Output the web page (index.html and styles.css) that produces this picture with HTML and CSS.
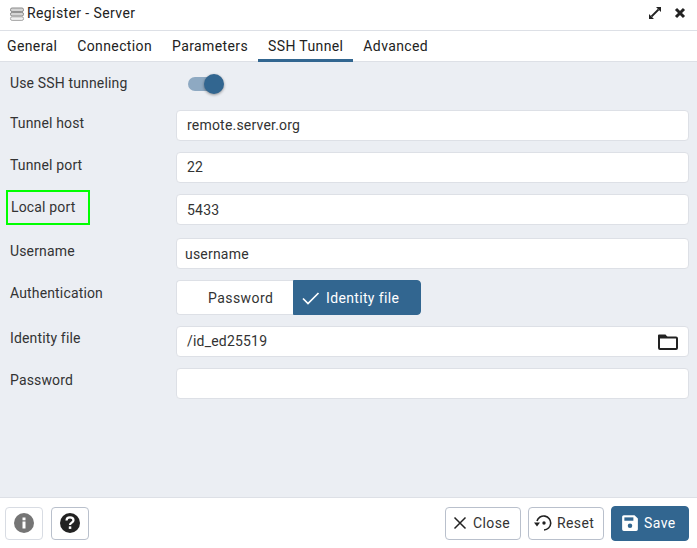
FILE: index.html
```html
<!DOCTYPE html>
<html lang="en">
<head>
    <meta charset="UTF-8">
    <meta name="viewport" content="width=device-width, initial-scale=1.0">
    <title>Register - Server</title>
    <link rel="stylesheet" href="styles.css">
</head>
<body>
    <div class="dialog">
        <div class="title-bar">
            <div class="title">
                <svg class="server-icon" width="16" height="16" viewBox="0 0 16 16">
                    <rect x="1.5" y="2" width="13" height="3.6" rx="1.6" fill="#d5d5d5" stroke="#8a8a8a"/>
                    <rect x="1.5" y="6.4" width="13" height="3.6" rx="1.6" fill="#d5d5d5" stroke="#8a8a8a"/>
                    <rect x="1.5" y="10.8" width="13" height="3.6" rx="1.6" fill="#f0f0f0" stroke="#a5a5a5"/>
                </svg>
                <span>Register - Server</span>
            </div>
            <div class="window-btns">
                <svg width="14" height="14" viewBox="0 0 14 14">
                    <path d="M3.5 10.5 10.5 3.5" stroke="#222" stroke-width="1.8"/>
                    <path d="M8 1h5v5zM1 8v5h5z" fill="#222"/>
                </svg>
                <svg width="12" height="12" viewBox="0 0 12 12">
                    <path d="M2 2 10 10M10 2 2 10" stroke="#222" stroke-width="3"/>
                </svg>
            </div>
        </div>

        <div class="tabs">
            <div class="tab">General</div>
            <div class="tab">Connection</div>
            <div class="tab">Parameters</div>
            <div class="tab active">SSH Tunnel</div>
            <div class="tab">Advanced</div>
        </div>

        <div class="form">
            <div class="row row-toggle">
                <label>Use SSH tunneling</label>
                <div class="toggle"><span class="track"></span><span class="knob"></span></div>
            </div>
            <div class="row">
                <label>Tunnel host</label>
                <div class="input">remote.server.org</div>
            </div>
            <div class="row">
                <label>Tunnel port</label>
                <div class="input">22</div>
            </div>
            <div class="row">
                <label class="marked">Local port</label>
                <div class="input low">5433</div>
            </div>
            <div class="row row-username">
                <label>Username</label>
                <div class="input low tight">username</div>
            </div>
            <div class="row row-auth">
                <label>Authentication</label>
                <div class="switch">
                    <div class="switch-btn">Password</div>
                    <div class="switch-btn selected">
                        <svg width="20" height="20" viewBox="0 0 20 20">
                            <path d="M2 10.500 7 15.500 17.500 5" fill="none" stroke="#fff" stroke-width="1.7"/>
                        </svg>
                        Identity file
                    </div>
                </div>
            </div>
            <div class="row">
                <label>Identity file</label>
                <div class="input with-icon">
                    <span>/id_ed25519</span>
                    <svg width="20" height="16" viewBox="0 0 20 16">
                        <path d="M1 3.500V14a1 1 0 0 0 1 1H18a1 1 0 0 0 1-1V4.500a1 1 0 0 0-1-1H1z" fill="none" stroke="#222" stroke-width="2"/>
                        <path d="M0 4V1.500A1 1 0 0 1 1 .500H7.500L10 3.500V4z" fill="#222"/>
                    </svg>
                </div>
            </div>
            <div class="row">
                <label>Password</label>
                <div class="input"></div>
            </div>
        </div>

        <div class="footer">
            <div class="footer-group">
                <button class="btn icon-btn faded">
                    <svg width="22" height="22" viewBox="0 0 22 22">
                        <circle cx="11" cy="11" r="10" fill="#757575"/>
                        <rect x="9.500" y="9.500" width="3" height="7" fill="#fff"/>
                        <rect x="9.500" y="5.500" width="3" height="2.800" fill="#fff"/>
                    </svg>
                </button>
                <button class="btn icon-btn">
                    <svg width="22" height="22" viewBox="0 0 22 22">
                        <circle cx="11" cy="11" r="10" fill="#222"/>
                        <path d="M7.500 8.500C7.500 6.500 9 5.300 11 5.300S14.500 6.500 14.500 8.300C14.500 10.500 11 10.700 11 13" fill="none" stroke="#fff" stroke-width="2.200"/>
                        <rect x="9.800" y="14.400" width="2.500" height="2.500" fill="#fff"/>
                    </svg>
                </button>
            </div>
            <div class="footer-group">
                <button class="btn btn-close">
                    <svg width="16" height="16" viewBox="0 0 16 16">
                        <path d="M2.500 2.500 13.500 13.500M13.500 2.500 2.500 13.500" stroke="#222" stroke-width="1.500"/>
                    </svg>
                    Close
                </button>
                <button class="btn btn-reset">
                    <svg width="18" height="16" viewBox="0 0 18 16">
                        <path d="M3 6A7 7 0 1 1 10 15" fill="none" stroke="#222" stroke-width="1.600"/>
                        <path d="M0 7.500H6L3 11.500z" fill="#222"/>
                        <circle cx="10" cy="8" r="1.700" fill="#222"/>
                    </svg>
                    Reset
                </button>
                <button class="btn primary">
                    <svg width="18" height="18" viewBox="0 0 16 16">
                        <path d="M1 2.500A1.500 1.500 0 0 1 2.500 1H12L15 4V13.500A1.500 1.500 0 0 1 13.500 15H2.500A1.500 1.500 0 0 1 1 13.500z" fill="#fff"/>
                        <rect x="3" y="3" width="8" height="3" fill="#326690"/>
                        <circle cx="8" cy="10.500" r="2" fill="#326690"/>
                    </svg>
                    Save
                </button>
            </div>
        </div>
    </div>
</body>
</html>
```

FILE: styles.css
```css
* {
    box-sizing: border-box;
}

body {
    margin: 0;
    font-family: Roboto, "Liberation Sans", sans-serif;
    font-size: 14px;
    color: #222;
    background: #fff;
}

.dialog {
    display: flex;
    flex-direction: column;
    width: 697px;
    height: 548px;
    overflow: hidden;
}

.title-bar {
    display: flex;
    justify-content: space-between;
    align-items: center;
    height: 31px;
    padding: 0 11px 4px 9px;
    border-bottom: 1px solid #dde0e6;
}

.title {
    display: flex;
    align-items: center;
    gap: 2px;
    letter-spacing: 0.4px;
}

.server-icon {
    margin-top: 2px;
}

.window-btns {
    display: flex;
    align-items: center;
    gap: 12px;
}

.tabs {
    display: flex;
    height: 31px;
    border-bottom: 1px solid #dde0e6;
}

.tab {
    padding: 7px 10px 0;
    color: #222;
    letter-spacing: 0.38px;
}

.tab:first-child {
    padding-left: 7px;
}

.tab.active {
    height: 31px;
    border-bottom: 3px solid #326690;
}

.form {
    flex: 1;
    padding: 0 8px 0 10px;
    background: #ebeef3;
}

.row {
    display: flex;
    align-items: flex-start;
    height: 32px;
    margin-bottom: 10px;
}

.row-toggle {
    height: 38px;
    margin: 5px 0 5px;
    align-items: center;
}

.row-username {
    margin-top: 12px;
}

.row-auth {
    height: 35px;
    margin-bottom: 11px;
}

label {
    width: 166px;
    flex-shrink: 0;
    margin-top: 5px;
    color: #333;
    letter-spacing: 0.15px;
}

label.marked {
    width: 84px;
    height: 35px;
    margin: -4px 86px 0 -4px;
    padding: 7px 0 0 3px;
    border: 2px solid #0f0;
}

.row-toggle label {
    margin-top: 0;
    padding-bottom: 7px;
}

.row-auth + .row label,
.row-auth + .row + .row label {
    margin-top: 4px;
}

.input {
    flex: 1;
    height: 31px;
    padding: 0 10px;
    line-height: 29px;
    background: #fff;
    border: 1px solid #dde0e6;
    border-radius: 4px;
    letter-spacing: 0.2px;
    color: #333;
}

.input.low {
    line-height: 31px;
}

.input.tight {
    padding-left: 8px;
}

.input.with-icon {
    display: flex;
    justify-content: space-between;
    align-items: center;
}

.toggle {
    position: relative;
    width: 38px;
    height: 24px;
    margin: 0 0 5px 11px;
}

.track {
    position: absolute;
    left: 1px;
    top: 5px;
    width: 32px;
    height: 14px;
    border-radius: 7px;
    background: #8ea9c2;
}

.knob {
    position: absolute;
    left: 17px;
    top: 2px;
    width: 20px;
    height: 20px;
    border-radius: 50%;
    background: #326690;
    box-shadow: 0 1px 3px rgba(0, 0, 0, 0.4);
}

.switch {
    display: flex;
    height: 35px;
}

.switch-btn {
    display: flex;
    align-items: center;
    width: 117px;
    padding-left: 31px;
    background: #fff;
    border: 1px solid #dde0e6;
    border-right: none;
    border-radius: 4px 0 0 4px;
    letter-spacing: 0.45px;
    color: #333;
}

.switch-btn.selected {
    gap: 5px;
    width: 128px;
    padding-left: 7px;
    background: #326690;
    border: 1px solid #326690;
    border-radius: 0 4px 4px 0;
    letter-spacing: 0.35px;
    color: #fff;
}

.footer {
    display: flex;
    justify-content: space-between;
    align-items: center;
    height: 51px;
    padding: 0 8px 0 5px;
    border-top: 1px solid #dde0e6;
}

.footer-group {
    display: flex;
    align-items: center;
    gap: 7px;
}

.footer-group:first-child {
    gap: 8px;
}

.btn {
    display: flex;
    align-items: center;
    gap: 5px;
    width: 76px;
    height: 33px;
    padding: 0;
    background: #fff;
    border: 1px solid #b9c0cc;
    border-radius: 4px;
    font: inherit;
    letter-spacing: 0.4px;
    color: #333;
}

.btn-close {
    padding-left: 6px;
}

.btn-reset {
    padding-left: 5px;
}

.icon-btn {
    justify-content: center;
    width: 38px;
}

.icon-btn.faded {
    border-color: #d8dce3;
}

.btn.primary {
    width: 78px;
    height: 35px;
    padding-left: 9px;
    background: #326690;
    border-color: #326690;
    color: #fff;
}
```
